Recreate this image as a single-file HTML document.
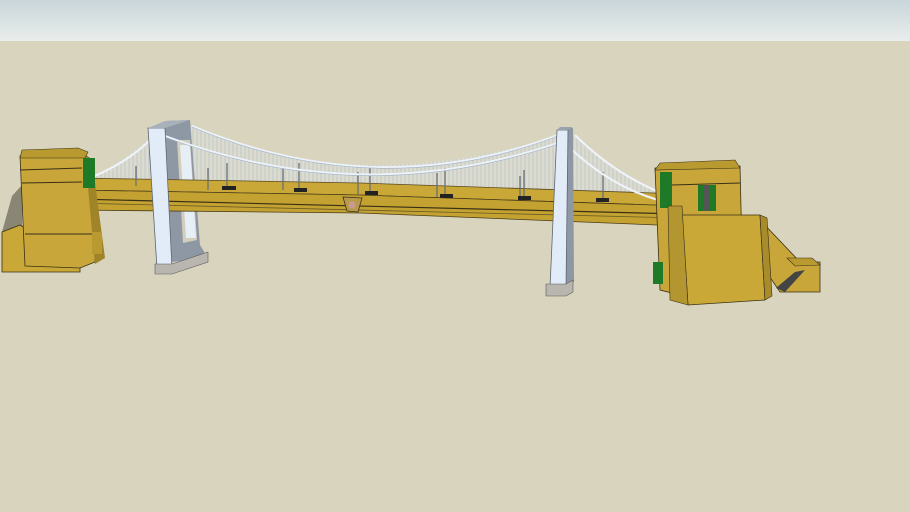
<!DOCTYPE html>
<html><head><style>
html,body{margin:0;padding:0;width:910px;height:512px;overflow:hidden;background:#d9d4be}
</style></head><body>
<svg width="910" height="512" viewBox="0 0 910 512" xmlns="http://www.w3.org/2000/svg">
<defs>
<linearGradient id="sky" x1="0" y1="0" x2="0" y2="1">
<stop offset="0" stop-color="#c9d6da"/><stop offset="1" stop-color="#e9edeb"/>
</linearGradient>
<pattern id="mesh" width="4" height="6" patternUnits="userSpaceOnUse">
<rect width="4" height="6" fill="#dcdcd0"/><line x1="1" y1="0" x2="1" y2="6" stroke="#b9c6d0" stroke-width="1"/>
</pattern>
</defs>
<rect x="0" y="0" width="910" height="41" fill="url(#sky)"/>
<rect x="0" y="41" width="910" height="471" fill="#d9d4be"/>

<!-- mesh between cables and deck -->
<path d="M80,182 Q120,165 150,138 L165,128 L192,126 Q360,200 565,133 L575,135 Q620,180 680,200 L680,196 L360,186 L75,180 Z" fill="url(#mesh)" opacity="0.85"/>

<!-- left pylon back side -->
<polygon points="165,121 190,120 200,245 208,258 172,262" fill="#8e98a4"/>
<polygon points="177,140 190,140 197,240 183,243" fill="#d9d4be" opacity="0.9"/>
<polygon points="180,145 190,145 196,238 186,238" fill="#e6eef6"/>

<!-- deck -->
<polygon points="75,178 360,183 682,194 682,206 360,195 75,190" fill="#c9a838" stroke="#5a4a20" stroke-width="0.8"/>
<polygon points="75,190 360,195 682,206 682,226 360,213 75,210" fill="#c3a232" stroke="#4a3c18" stroke-width="0.8"/>
<line x1="75" y1="199" x2="682" y2="214" stroke="#3a3016" stroke-width="1.2"/>
<line x1="75" y1="203" x2="682" y2="218" stroke="#6a5a24" stroke-width="0.8"/>
<polygon points="343,197 362,198 358,212 347,211" fill="#b89a4c" stroke="#3a3016" stroke-width="0.8"/>
<circle cx="352" cy="205" r="3.5" fill="#c99a90"/>

<!-- lamps -->
<g stroke="#6a6f74" stroke-width="1.3">
<line x1="136" y1="166" x2="136" y2="186"/><line x1="208" y1="168" x2="208" y2="190"/>
<line x1="227" y1="163" x2="227" y2="186"/><line x1="283" y1="168" x2="283" y2="190"/>
<line x1="299" y1="163" x2="299" y2="188"/><line x1="358" y1="172" x2="358" y2="194"/>
<line x1="370" y1="166" x2="370" y2="192"/><line x1="437" y1="173" x2="437" y2="197"/>
<line x1="445" y1="168" x2="445" y2="194"/><line x1="520" y1="176" x2="520" y2="199"/>
<line x1="524" y1="170" x2="524" y2="196"/><line x1="603" y1="172" x2="603" y2="199"/>
</g>
<g fill="#222">
<rect x="222" y="186" width="14" height="4"/><rect x="294" y="188" width="13" height="4"/>
<rect x="365" y="191" width="13" height="4"/><rect x="440" y="194" width="13" height="4"/>
<rect x="518" y="196" width="13" height="4"/><rect x="596" y="198" width="13" height="4"/>
</g>

<!-- cables -->
<g fill="none" stroke="#eef3fa" stroke-width="2.2">
<path d="M192,126 Q380,205 563,133"/>
<path d="M162,135 Q360,210 558,143"/>
<path d="M80,182 Q125,165 150,140"/>
<path d="M575,135 Q620,180 680,200"/>
<path d="M570,148 Q620,195 680,205"/>
</g>
<g fill="none" stroke="#9fb0c4" stroke-width="0.6">
<path d="M192,127 Q380,206 563,134"/>
<path d="M162,136 Q360,211 558,144"/>
</g>

<!-- left pylon front -->
<polygon points="148,128 165,128 172,268 157,268" fill="#e2ecf8" stroke="#5c6470" stroke-width="0.8"/>
<polygon points="148,128 165,121 190,120 165,128" fill="#a8b0ba"/>
<polygon points="155,264 172,264 208,252 208,262 172,274 155,274" fill="#b8b6ae" stroke="#5a5a5a" stroke-width="0.6"/>

<!-- right pylon -->
<polygon points="568,128 573,128 574,282 566,286" fill="#8e98a4"/>
<polygon points="557,130 568,130 566,288 550,288" fill="#e2ecf8" stroke="#5c6470" stroke-width="0.8"/>
<polygon points="557,130 560,127 573,127 568,130" fill="#9aa2ac"/>
<polygon points="546,284 566,284 573,280 573,292 566,296 546,296" fill="#b8b6ae" stroke="#5a5a5a" stroke-width="0.6"/>

<!-- left abutment -->
<polygon points="12,196 22,185 22,262 2,272 2,232" fill="#8a8676"/>
<polygon points="2,232 20,225 80,262 80,272 2,272" fill="#c9a838" stroke="#3a3016" stroke-width="0.8"/>
<polygon points="20,156 85,155 92,160 95,262 80,268 25,266" fill="#c8a63a" stroke="#3a3016" stroke-width="0.8"/>
<polygon points="85,155 92,160 105,258 95,264" fill="#a08428"/>
<polygon points="22,150 78,148 88,152 85,158 20,158" fill="#b89a30" stroke="#3a3016" stroke-width="0.6"/>
<rect x="83" y="158" width="12" height="30" fill="#1f7a28"/>
<line x1="20" y1="170" x2="82" y2="168" stroke="#3a3016"/>
<line x1="22" y1="183" x2="82" y2="182" stroke="#3a3016"/>
<line x1="25" y1="234" x2="95" y2="234" stroke="#3a3016"/>
<rect x="92" y="232" width="10" height="22" fill="#b89a30"/>

<!-- right abutment -->
<polygon points="655,168 740,166 742,250 700,300 660,290" fill="#c8a63a" stroke="#3a3016" stroke-width="0.8"/>
<polygon points="660,163 735,160 740,168 655,170" fill="#b89a30" stroke="#3a3016" stroke-width="0.6"/>
<rect x="660" y="172" width="12" height="36" fill="#1f7a28"/>
<rect x="698" y="185" width="18" height="26" fill="#1f7a28"/>
<rect x="704" y="185" width="5" height="26" fill="#555"/>
<rect x="653" y="262" width="10" height="22" fill="#1f7a28"/>
<line x1="672" y1="185" x2="740" y2="183" stroke="#3a3016"/>
<polygon points="760,220 800,262 820,262 820,292 780,292 765,270" fill="#c8a63a" stroke="#3a3016" stroke-width="0.8"/>
<polygon points="776,288 795,272 805,270 785,292" fill="#444"/>
<polygon points="787,258 812,258 820,265 795,266" fill="#b89a30" stroke="#3a3016" stroke-width="0.6"/>
<polygon points="682,215 760,215 765,300 688,305" fill="#c9a838" stroke="#3a3016" stroke-width="0.8"/>
<polygon points="760,215 767,218 772,296 765,300" fill="#a88c2c" stroke="#3a3016" stroke-width="0.6"/>
<polygon points="668,206 682,206 688,305 670,300" fill="#b49630" stroke="#3a3016" stroke-width="0.6"/>
</svg>
</body></html>
